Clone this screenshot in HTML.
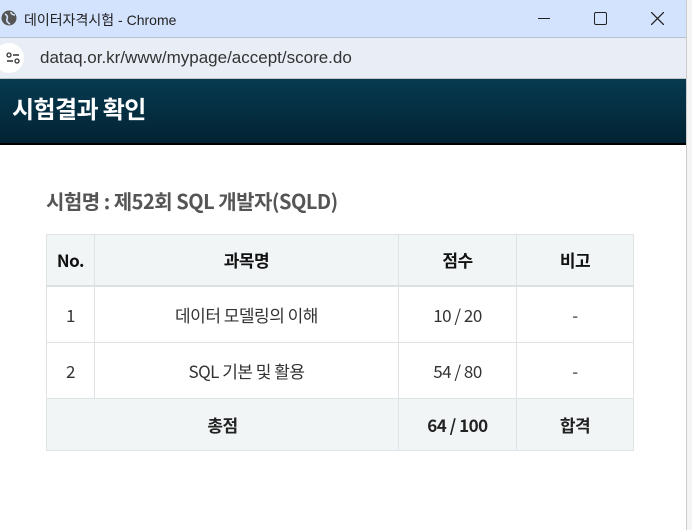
<!DOCTYPE html><html><head><meta charset="utf-8"><style>
body{margin:0;width:692px;height:530px;overflow:hidden;background:#fff;font-family:"Liberation Sans","Noto Sans CJK KR",sans-serif;position:relative}
.win{position:absolute;left:0;top:0;width:686px;height:530px;background:#fff}
.tb{position:absolute;left:0;top:0;width:686px;height:37px;background:#d3e3fd;border-bottom:1px solid #b4bfcf}
.ab{position:absolute;left:0;top:38px;width:686px;height:40px;background:#e9eef6;border-bottom:1px solid #c4c7c5}
.hd{position:absolute;left:0;top:79px;width:686px;height:64px;background:linear-gradient(#073a50,#022333);border-bottom:2px solid #000}
.side{position:absolute;left:686px;top:0;width:6px;height:530px;background:#f4f4f4;border-left:1px solid #ccc}
.kr{font-family:"Noto Sans CJK KR",sans-serif}
table{position:absolute;left:46px;top:234px;width:588px;border-collapse:collapse;font-size:17px;font-family:"Noto Sans CJK KR",sans-serif;letter-spacing:-0.5px}
td{border:1px solid #dfe3e6;text-align:center;color:#333;padding:0;line-height:20px}
.h td{background:#f2f5f6;font-weight:bold;color:#111;height:50px;border-bottom:2px solid #dde1e4}
.r td{height:55px}
.t td{background:#f2f5f6;font-weight:bold;color:#222;height:51px}
</style></head><body>
<div class="win">
<div class="tb">
<svg style="position:absolute;left:1px;top:10px" width="16" height="16" viewBox="0 0 16 16"><circle cx="8" cy="8" r="7.5" fill="#555"/><path d="M4 4c2 1 3 3 2 5s1 4 3 5M10 2c0 2 2 3 4 3" stroke="#d3e3fd" stroke-width="1.6" fill="none"/></svg>
<div style="position:absolute;left:24px;top:10px;font-size:14px;color:#222">데이터자격시험 - Chrome</div>
<div style="position:absolute;left:538px;top:18px;width:12px;height:1px;background:#222"></div>
<div style="position:absolute;left:594px;top:12px;width:11px;height:11px;border:1.3px solid #222;border-radius:2px"></div>
<svg style="position:absolute;left:651px;top:12px" width="13" height="13"><path d="M0 0L13 13M13 0L0 13" stroke="#222" stroke-width="1.3"/></svg>
</div>
<div class="ab">
<div style="position:absolute;left:-6px;top:5px;width:30px;height:30px;border-radius:50%;background:#fff"></div>
<svg style="position:absolute;left:6px;top:13px" width="14" height="14"><circle cx="3" cy="4" r="2" fill="none" stroke="#333" stroke-width="1.3"/><path d="M7 4h6M1 10h6" stroke="#333" stroke-width="1.5"/><circle cx="11" cy="10" r="2" fill="none" stroke="#333" stroke-width="1.3"/></svg>
<div style="position:absolute;left:40px;top:10px;font-size:17px;color:#333">dataq.or.kr/www/mypage/accept/score.do</div>
</div>
<div class="hd"><div class="kr" style="position:absolute;left:12px;top:13px;font-size:24px;line-height:32px;font-weight:bold;color:#fff;letter-spacing:-0.6px">시험결과 확인</div></div>
<div class="kr" style="position:absolute;left:46px;top:187px;font-size:20px;line-height:28px;font-weight:bold;color:#555;letter-spacing:-0.5px">시험명 : 제52회 SQL 개발자(SQLD)</div>
<table>
<tr class="h"><td style="width:47px">No.</td><td style="width:303px">과목명</td><td style="width:117px">점수</td><td>비고</td></tr>
<tr class="r"><td>1</td><td>데이터 모델링의 이해</td><td>10 / 20</td><td>-</td></tr>
<tr class="r"><td>2</td><td>SQL 기본 및 활용</td><td>54 / 80</td><td>-</td></tr>
<tr class="t"><td colspan="2">총점</td><td>64 / 100</td><td>합격</td></tr>
</table>
</div>
<div class="side"></div>
</body></html>
